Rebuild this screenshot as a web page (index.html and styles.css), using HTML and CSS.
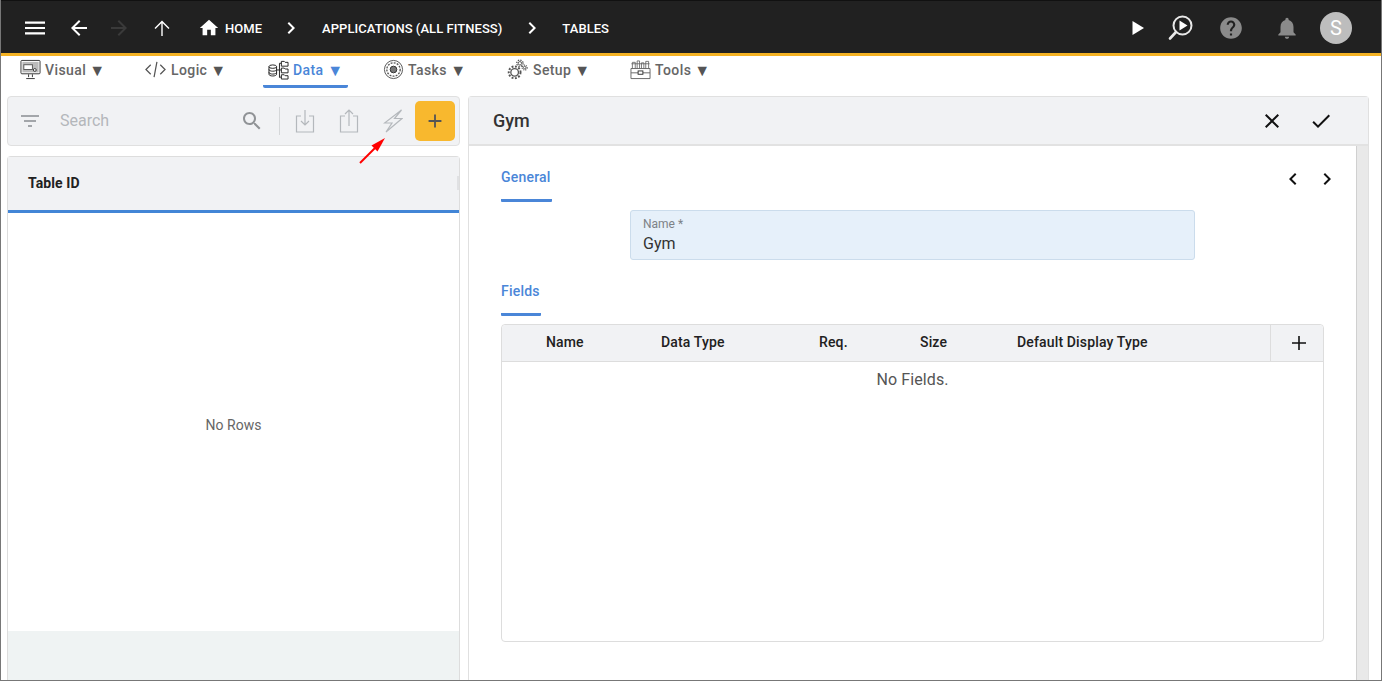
FILE: index.html
```html
<!DOCTYPE html>
<html lang="en">
<head>
<meta charset="utf-8">
<title>Tables</title>
<link rel="stylesheet" href="styles.css">
</head>
<body>
<div class="app">
  <header class="topbar">
    <svg class="ico menu" viewBox="0 0 24 24"><path d="M2 18.500h20v-2.200H2zm0-5.400h20v-2.200H2zM2 5.500v2.200h20V5.500z"/></svg>
    <svg class="ico back" viewBox="0 0 24 24"><path d="M20 11H7.830l5.590-5.590L12 4l-8 8 8 8 1.410-1.410L7.830 13H20v-2z"/></svg>
    <svg class="ico fwd" viewBox="0 0 24 24"><path d="M12 4l-1.410 1.410L16.170 11H4v2h12.170l-5.580 5.590L12 20l8-8z"/></svg>
    <svg class="ico up" viewBox="0 0 24 24"><path d="M4.500 12l1 1L11.300 7.200V20h1.400V7.200l5.800 5.800 1-1L12 4.500z"/></svg>
    <svg class="ico home" viewBox="0 0 24 24"><path d="M10 20v-6h4v6h5v-8h3L12 3 2 12h3v8z"/></svg>
    <span class="crumb crumb-home">HOME</span>
    <svg class="ico chev chev-a" viewBox="0 0 24 24"><path d="M10 6L8.590 7.410 13.170 12l-4.580 4.590L10 18l6-6z"/></svg>
    <span class="crumb crumb-app">APPLICATIONS (ALL FITNESS)</span>
    <svg class="ico chev chev-b" viewBox="0 0 24 24"><path d="M10 6L8.590 7.410 13.170 12l-4.580 4.590L10 18l6-6z"/></svg>
    <span class="crumb crumb-tables">TABLES</span>
    <div class="top-right">
      <svg class="ico play" viewBox="0 0 24 24"><path d="M6.500 5v14l11.500-7z"/></svg>
      <svg class="ico playsearch" viewBox="0 0 28 28"><circle cx="15.500" cy="11.500" r="9" fill="none" stroke="#e8e8e8" stroke-width="2"/><path d="M12.500 6.500v10l8-5z"/><path d="M9 18l-6 6.500" stroke="#e8e8e8" stroke-width="2.600" stroke-linecap="round"/></svg>
      <svg class="ico help" viewBox="0 0 24 24"><path d="M12 2C6.480 2 2 6.480 2 12s4.480 10 10 10 10-4.480 10-10S17.520 2 12 2zm1 17h-2v-2h2v2zm2.070-7.750l-.9.920C13.450 12.900 13 13.500 13 15h-2v-.5c0-1.100.45-2.100 1.170-2.830l1.240-1.260c.37-.36.59-.86.59-1.410 0-1.100-.9-2-2-2s-2 .9-2 2H8c0-2.210 1.790-4 4-4s4 1.790 4 4c0 .88-.36 1.680-.93 2.250z"/></svg>
      <svg class="ico bell" viewBox="0 0 24 24"><path d="M12 22c1.100 0 2-.9 2-2h-4c0 1.100.89 2 2 2zm6-6v-5c0-3.070-1.640-5.640-4.500-6.320V4c0-.83-.67-1.500-1.500-1.500s-1.500.67-1.500 1.500v.68C7.630 5.360 6 7.920 6 11v5l-2 2v1h16v-1l-2-2z"/></svg>
      <div class="avatar">S</div>
    </div>
  </header>

  <nav class="tabs">
    <a class="tab tab-visual">
      <svg class="tabico" viewBox="0 0 22 22" fill="none" stroke="#333" stroke-width="1"><rect x="1" y="1.500" width="20" height="14" rx="1"/><rect x="2.500" y="3" width="17" height="11" fill="#bbb" stroke="none"/><rect x="4" y="6" width="9" height="5" fill="#fff" stroke="#555"/><circle cx="15.500" cy="11.500" r="1.500" fill="#fff" stroke="#333"/><path d="M9 16v3M13 16v3M6.500 20.500h9"/></svg>
      <span>Visual</span><span class="caret">▼</span>
    </a>
    <a class="tab tab-logic">
      <svg class="tabico" viewBox="0 0 22 22" fill="none" stroke="#555" stroke-width="1.300"><path d="M6 6l-5 5 5 5M16 6l5 5-5 5M12.500 3l-3 16"/></svg>
      <span>Logic</span><span class="caret">▼</span>
    </a>
    <a class="tab tab-data active">
      <svg class="tabico" viewBox="0 0 22 22" fill="none" stroke="#222" stroke-width="1"><ellipse cx="5" cy="8" rx="4" ry="1.800"/><path d="M1 8v8c0 1 1.800 1.800 4 1.800S9 17 9 16V8M1 11c0 1 1.800 1.800 4 1.800S9 12 9 11M1 14c0 1 1.800 1.800 4 1.800S9 15 9 14"/><path d="M9 11.500h3M12 4.500v15M12 4.500h2M12 11.500h2M12 19h2"/><path d="M14 2.500h3l1 1h3v4h-7zM14 9.500h3l1 1h3v4h-7zM14 16.500h3l1 1h3v3.500h-7z"/></svg>
      <span>Data</span><span class="caret">▼</span>
    </a>
    <a class="tab tab-tasks">
      <svg class="tabico" viewBox="0 0 22 22" fill="none" stroke="#555"><circle cx="11" cy="11" r="9.500"/><circle cx="11" cy="11" r="7" stroke-dasharray="2 1.300" stroke-width="1.400"/><circle cx="11" cy="11" r="3.500" fill="#777" stroke="#333"/></svg>
      <span>Tasks</span><span class="caret">▼</span>
    </a>
    <a class="tab tab-setup">
      <svg class="tabico" viewBox="0 0 22 22" fill="none" stroke="#555"><circle cx="8" cy="14" r="4" stroke-width="1.400"/><circle cx="8" cy="14" r="6.200" stroke-dasharray="2 1.600" stroke-width="2"/><circle cx="13.500" cy="4.500" r="1.800"/><circle cx="13.500" cy="4.500" r="3.300" stroke-dasharray="1.400 1.200" stroke-width="1.400"/><circle cx="18.500" cy="9" r="1.300"/><circle cx="18.500" cy="9" r="2.600" stroke-dasharray="1.200 1" stroke-width="1.200"/></svg>
      <span>Setup</span><span class="caret">▼</span>
    </a>
    <a class="tab tab-tools">
      <svg class="tabico" viewBox="0 0 22 22" fill="none" stroke="#666"><path d="M1 10h20v10.500H1zM1 14.500h20"/><rect x="8.500" y="12.500" width="5" height="3.500" fill="#fff" stroke="#333"/><path d="M2.500 10V3.500h3V10M7.500 10V2h2.500v8M12 10V4h2.500v6M16.500 10V2.500h3V10M1.500 5h19" stroke-width=".9"/></svg>
      <span>Tools</span><span class="caret">▼</span>
    </a>
  </nav>

  <main class="workspace">
    <section class="left">
      <div class="toolbar">
        <svg class="filter" viewBox="0 0 24 24"><path d="M10 18h4v-2h-4v2zM3 6v2h18V6H3zm3 7h12v-2H6v2z"/></svg>
        <span class="search-ph">Search</span>
        <svg class="magnifier" viewBox="0 0 24 24"><path d="M15.500 14h-.79l-.28-.27C15.410 12.590 16 11.110 16 9.500 16 5.910 13.090 3 9.500 3S3 5.910 3 9.500 5.910 16 9.500 16c1.610 0 3.090-.59 4.230-1.570l.27.28v.79l5 4.990L20.490 19l-4.990-5zm-6 0C7.010 14 5 11.990 5 9.500S7.010 5 9.500 5 14 7.010 14 9.500 11.990 14 9.500 14z"/></svg>
        <span class="vsep"></span>
        <svg class="tool tool-down" viewBox="0 0 20 26" fill="none" stroke="#b4b8bc" stroke-width="1.200"><path d="M6 8H1.500v16h17V8H14"/><path d="M10 2v15M6 13l4 4 4-4"/></svg>
        <svg class="tool tool-up" viewBox="0 0 20 26" fill="none" stroke="#b4b8bc" stroke-width="1.200"><path d="M6 8H1.500v16h17V8H14"/><path d="M10 18V2M6 6l4-4 4 4"/></svg>
        <svg class="tool tool-bolt" viewBox="0 0 20 26" fill="none" stroke="#b4b8bc" stroke-width="1.200"><path d="M18.500 2L1.500 15H9L3 24l16-13.500h-7.500z"/></svg>
        <button class="add-btn" type="button"><svg viewBox="0 0 24 24"><path d="M19 13h-6v6h-2v-6H5v-2h6V5h2v6h6v2z"/></svg></button>
      </div>
      <div class="table">
        <div class="table-head"><span>Table ID</span><i class="resizer"></i></div>
        <div class="table-body">No Rows</div>
        <div class="table-foot"></div>
      </div>
      <svg class="red-arrow" viewBox="0 0 28 28"><path d="M1 27L21 7" stroke="#f00" stroke-width="2"/><path d="M26 2L12.500 9.500l6 6z" fill="#f00"/></svg>
    </section>

    <section class="right">
      <div class="detail-head">
        <h1>Gym</h1>
        <svg class="head-ico close" viewBox="0 0 24 24"><path d="M19 6.410L17.590 5 12 10.590 6.410 5 5 6.410 10.590 12 5 17.590 6.410 19 12 13.410 17.590 19 19 17.590 13.410 12z"/></svg>
        <svg class="head-ico check" viewBox="0 0 24 24"><path d="M9 16.170L4.830 12l-1.420 1.410L9 19 21 7l-1.410-1.410z"/></svg>
      </div>
      <div class="detail-body">
        <div class="form">
          <div class="section-row">
            <div class="section-tab tab-general">General</div>
            <svg class="pager pager-prev" viewBox="0 0 24 24"><path d="M15.410 7.410L14 6l-6 6 6 6 1.410-1.410L10.830 12z"/></svg>
            <svg class="pager pager-next" viewBox="0 0 24 24"><path d="M10 6L8.590 7.410 13.170 12l-4.580 4.590L10 18l6-6z"/></svg>
          </div>
          <div class="field">
            <label>Name *</label>
            <div class="value">Gym</div>
          </div>
          <div class="section-tab tab-fields">Fields</div>
          <div class="grid">
            <div class="grid-head">
              <span class="col-name">Name</span>
              <span>Data Type</span>
              <span>Req.</span>
              <span>Size</span>
              <span>Default Display Type</span>
              <span class="col-add"><svg viewBox="0 0 24 24"><path d="M19 12.800h-6.200V19h-1.600v-6.200H5v-1.600h6.200V5h1.600v6.200H19z"/></svg></span>
            </div>
            <div class="grid-empty">No Fields.</div>
          </div>
        </div>
        <div class="scrollbar"></div>
      </div>
    </section>
  </main>
</div>
</body>
</html>
```

FILE: styles.css
```css
* { box-sizing: border-box; }
html, body { margin: 0; padding: 0; background: #fff; }
body { font-family: Roboto, "Liberation Sans", sans-serif; color: #212121; }

.app {
  width: 1382px;
  height: 681px;
  display: flex;
  flex-direction: column;
  overflow: hidden;
  border-left: 1px solid #777;
  border-right: 1px solid #777;
  border-bottom: 1px solid #777;
}

/* top bar */
.topbar {
  flex: none;
  height: 56px;
  background: #212121;
  border-top: 1px solid #111;
  border-bottom: 3px solid #f4b223;
  display: flex;
  align-items: center;
  padding: 2px 0 0 22px;
  margin-left: -1px;
  margin-right: -1px;
}
.ico { flex: none; width: 24px; height: 24px; fill: #fff; }
.menu { margin-left: 1px; }
.back { margin-left: 20px; }
.fwd { margin-left: 16px; fill: #3a3a3a; }
.up { margin-left: 19px; }
.home { margin-left: 24px; width: 22px; height: 22px; }
.crumb { font-size: 13px; font-weight: 500; color: #fff; letter-spacing: 0.05px; white-space: nowrap; }
.crumb-home { margin-left: 5px; }
.chev-a { margin-left: 17px; }
.crumb-app { margin-left: 19px; }
.chev-b { margin-left: 18px; }
.crumb-tables { margin-left: 18px; }
.top-right { margin-left: auto; display: flex; align-items: center; padding-right: 30px; }
.playsearch { width: 28px; height: 28px; margin-left: 17px; }
.help { fill: #8a8a8a; margin-left: 23px; width: 26px; height: 26px; }
.bell { fill: #8a8a8a; margin-left: 30px; width: 26px; height: 26px; }
.avatar {
  width: 32px; height: 32px; margin-left: 20px; border-radius: 50%;
  background: #bdbdbd; color: #fff; font-size: 20px;
  display: flex; align-items: center; justify-content: center;
}

/* tabs */
.tabs {
  flex: none; height: 40px; display: grid; padding-left: 14px;
  grid-template-columns: 125px 123px 115px 124px 123px auto;
  justify-items: start; align-items: start;
}
.tab {
  height: 32px; display: flex; align-items: center; gap: 4px; padding: 0 5px 2px;
  font-size: 14px; font-weight: 500; color: #666; letter-spacing: 0.4px; white-space: nowrap;
  border-bottom: 3px solid transparent;
  border-radius: 2px;
}
.tabico { width: 21px; height: 21px; flex: none; }
.caret { width: 11px; font-size: 14px; line-height: 14px; color: #555; transform: scale(1.15); letter-spacing: 0; text-align: center; }
.tab-data { min-width: 85px; margin-left: 0; }
.tab-setup > span:first-of-type, .tab-logic > span:first-of-type { margin-left: 1px; }
.tab.active { color: #4a86d8; border-bottom-color: #4a86d8; }
.tab.active .caret { color: #4a86d8; }

/* workspace */
.workspace { flex: 1; min-height: 0; display: flex; padding-left: 6px; gap: 8px; }
.left { width: 453px; display: flex; flex-direction: column; gap: 10px; position: relative; }
.toolbar {
  flex: none; height: 50px; display: flex; align-items: center;
  background: #f1f2f4; border: 1px solid #e0e0e0; border-radius: 4px;
  padding-left: 10px;
}
.filter { width: 24px; height: 24px; fill: #a3a6aa; flex: none; }
.search-ph { margin-left: 18px; width: 184px; font-size: 16px; color: #b4b7bb; padding-bottom: 2px; }
.magnifier { width: 24px; height: 24px; fill: #909396; flex: none; margin-left: -4px; }
.vsep { width: 1px; height: 28px; background: #d5d7d9; margin-left: 15px; flex: none; }
.tool { width: 20px; height: 26px; flex: none; }
.tool-down { margin-left: 15px; }
.tool-up { margin-left: 24px; }
.tool-bolt { margin-left: 24px; }
.add-btn {
  width: 40px; height: 40px; margin-left: 12px; padding: 0; border: 0; border-radius: 5px;
  background: #f8b82e; display: flex; align-items: center; justify-content: center;
}
.add-btn svg { width: 22px; height: 22px; fill: #555; }
.table {
  flex: 1; min-height: 0; display: flex; flex-direction: column;
  border: 1px solid #ddd; border-bottom: 0; border-radius: 4px 4px 0 0;
}
.table-head {
  flex: none; height: 56px; background: #f1f2f4; border-bottom: 3px solid #4285d6;
  display: flex; align-items: center; justify-content: space-between;
  padding: 0 0 2px 20px; font-size: 14px; font-weight: 700; letter-spacing: 0.1px;
}
.resizer { width: 2px; height: 14px; background: #e0e1e3; }
.table-body {
  flex: 1; min-height: 0; background: #fff; color: #666; font-size: 14px; padding-top: 6px;
  display: flex; align-items: center; justify-content: center;
}
.table-foot { flex: none; height: 49px; background: #eff3f3; }
.red-arrow { position: absolute; left: 352px; top: 40px; width: 28px; height: 28px; }

/* detail panel */
.right {
  width: 901px; display: flex; flex-direction: column;
  border: 1px solid #e0e0e0; border-bottom: 0; border-radius: 4px 4px 0 0;
}
.detail-head {
  flex: none; height: 49px; background: #f1f2f4; border-bottom: 2px solid #e2e2e2;
  display: flex; align-items: center; padding-left: 24px;
}
.detail-head h1 { margin: 0; font-size: 18px; font-weight: 500; color: #333; margin-right: auto; }
.head-ico { width: 24px; height: 24px; fill: #111; flex: none; }
.close { margin-right: 25px; }
.check { margin-right: 35px; }
.detail-body { flex: 1; min-height: 0; display: flex; }
.form { flex: 1; min-width: 0; padding: 0 32px; }
.section-row { display: flex; align-items: flex-start; height: 64px; }
.section-tab {
  width: max-content; font-size: 14px; font-weight: 500; color: #4a86d8; letter-spacing: 0.2px;
  height: 41px; display: flex; align-items: center; border-bottom: 3px solid #4a86d8; border-radius: 1px;
}
.tab-general { margin-top: 15px; margin-right: auto; padding-right: 1px; padding-bottom: 6px; }
.pager { width: 24px; height: 24px; fill: #111; flex: none; margin-top: 21px; }
.pager-next { margin-left: 10px; margin-right: -15px; }
.field {
  width: 565px; height: 50px; margin-left: 129px; background: #e6f0fa;
  border: 1px solid #cbdcec; border-radius: 3px; padding: 6px 12px;
}
.field label { display: block; font-size: 12px; line-height: 14px; color: #7d8287; }
.field .value { font-size: 16px; line-height: 20px; margin-top: 3px; color: #333; }
.tab-fields { margin-top: 11px; height: 45px; padding-right: 1px; padding-bottom: 2px; }
.grid {
  width: 823px; height: 318px; margin-top: 8px;
  border: 1px solid #ddd; border-radius: 4px;
}
.grid-head {
  height: 37px; background: #f1f2f4; border-bottom: 1px solid #ddd;
  display: grid; grid-template-columns: 159px 158px 101px 97px 253px 1fr;
  align-items: center; font-size: 14px; font-weight: 500; color: #212121; letter-spacing: 0.15px;
  border-radius: 4px 4px 0 0;
}
.grid-head > span:not(.col-add) { padding-bottom: 2px; }
.grid-head > .col-name { padding-left: 44px; }
.col-add {
  height: 36px; border-left: 1px solid #ddd; padding-left: 4px;
  display: flex; align-items: center; justify-content: center;
}
.col-add svg { width: 24px; height: 24px; fill: #111; }
.grid-empty { text-align: center; font-size: 16px; line-height: 20px; padding-top: 8px; color: #555; letter-spacing: 0.1px; }
.scrollbar { flex: none; width: 12px; background: #e9e9e9; border-left: 1px solid #d0d0d0; }
```
